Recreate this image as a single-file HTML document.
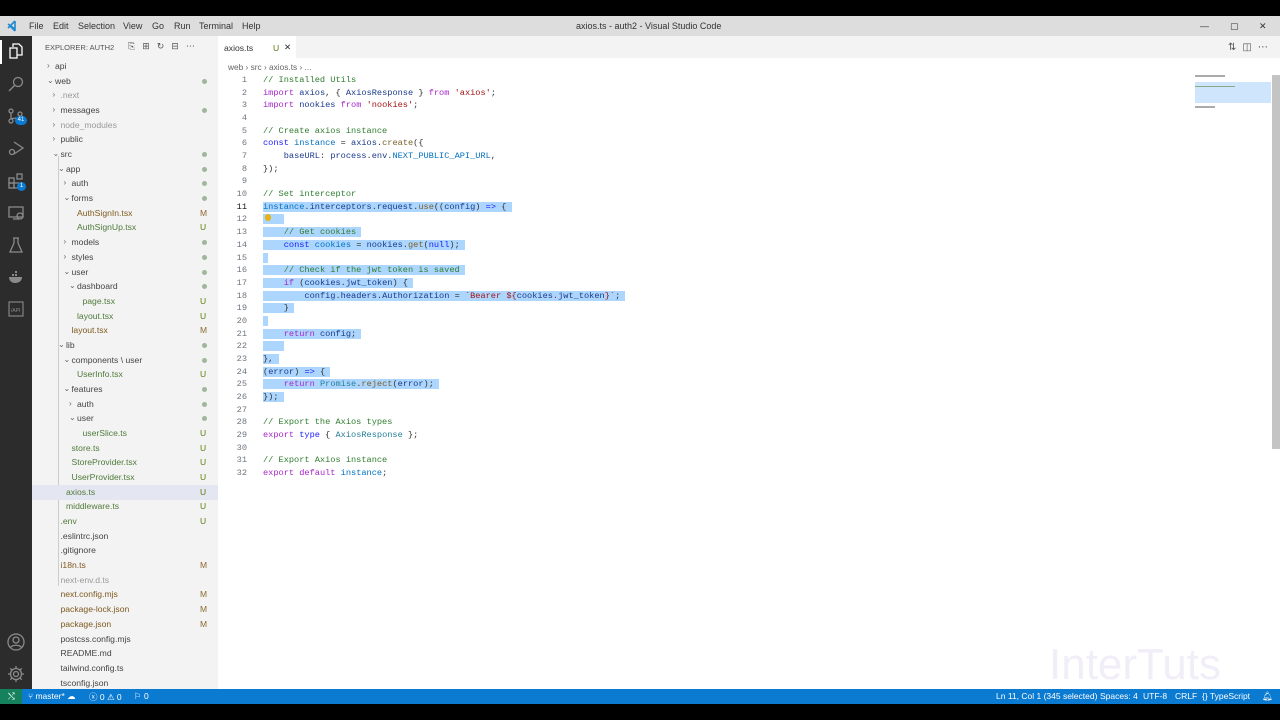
<!DOCTYPE html>
<html><head><meta charset="utf-8"><style>
*{margin:0;padding:0;box-sizing:border-box}
body{width:1280px;height:720px;background:#000;position:relative;overflow:hidden;font-family:"Liberation Sans","DejaVu Sans",sans-serif}
.abs{position:absolute}
#title{left:0;top:16px;width:1280px;height:20px;background:#dddddd;font-size:9px;color:#333}
#title span{position:absolute;top:5px}
#act{left:0;top:36px;width:32px;height:653px;background:#2c2c2c}
#side{left:32px;top:36px;width:186px;height:653px;background:#f3f3f3;font-size:8.6px;color:#444}
.row{position:absolute;left:0;width:186px;height:14.68px;line-height:14.68px;white-space:nowrap}
.row .b{position:absolute;left:168px;font-size:8.5px}
.row .d{position:absolute;left:170px;top:5px;width:5px;height:5px;border-radius:50%;background:#9fb79a}
.chev{position:absolute;font-size:8px;color:#666}
#tabs{left:218px;top:36px;width:1062px;height:22px;background:#f3f3f3}
#ed{left:218px;top:58px;width:1062px;height:631px;background:#fff}
.ln{position:absolute;left:0;width:29px;text-align:right;font:8.65px "Liberation Mono",monospace;color:#6e7681}
.cl{position:absolute;left:45px;font:8.65px/12.68px "Liberation Mono",monospace;color:#333;white-space:pre}
.s{background:#add6ff}
.c{color:#2f7d2f}.k{color:#1a1aff}.p{color:#a626c9}.st{color:#a31515}.v{color:#1a3a8a}.f{color:#795e26}.t{color:#267f99}.n{color:#0070c1}
#status{left:0;top:689px;width:1280px;height:15px;background:#0b7ad1;color:#fff;font-size:8.5px}
#status span{position:absolute;top:2px}
</style></head><body>
<div id="title" class="abs">
<svg class="abs" style="left:6px;top:4px" width="12" height="12" viewBox="0 0 12 12"><path d="M9 1L4 6l5 5M9 1v10M2 4l7 5M2 8l2-2" stroke="#1f8ad2" stroke-width="1.6" fill="none"/></svg>
<span style="left:29px">File</span><span style="left:53px">Edit</span><span style="left:78px">Selection</span><span style="left:123px">View</span><span style="left:152px">Go</span><span style="left:174px">Run</span><span style="left:199px">Terminal</span><span style="left:242px">Help</span>
<span style="left:576px">axios.ts - auth2 - Visual Studio Code</span>
<span style="left:1200px">—</span><span style="left:1230px">▢</span><span style="left:1259px">✕</span>
</div>
<div id="act" class="abs">
<div class="abs" style="left:0;top:4px;width:2px;height:24px;background:#fff"></div>
<svg class="abs" style="left:8px;top:7px" width="16" height="16" viewBox="0 0 16 16" fill="none" stroke="#fff" stroke-width="1.3"><path d="M5 4V1h6l3 3v8H9"/><rect x="2" y="5" width="7" height="10"/></svg>
<svg class="abs" style="left:8px;top:40px" width="16" height="16" viewBox="0 0 16 16" fill="none" stroke="#8a8a8a" stroke-width="1.3"><circle cx="10" cy="6" r="4.5"/><path d="M7 9l-6 6"/></svg>
<svg class="abs" style="left:8px;top:72px" width="16" height="16" viewBox="0 0 16 16" fill="none" stroke="#8a8a8a" stroke-width="1.3"><circle cx="3" cy="3" r="2"/><circle cx="3" cy="13" r="2"/><circle cx="12" cy="6" r="2"/><path d="M3 5v6M12 8c0 3-9 2-9 3"/></svg>
<div class="abs" style="left:15px;top:80px;width:12px;height:9px;border-radius:5px;background:#0b7ad1;color:#fff;font-size:6px;text-align:center;line-height:9px">41</div>
<svg class="abs" style="left:8px;top:104px" width="16" height="16" viewBox="0 0 16 16" fill="none" stroke="#8a8a8a" stroke-width="1.3"><path d="M6 2l9 6-9 6"/><circle cx="4" cy="12" r="2.5"/></svg>
<svg class="abs" style="left:8px;top:137px" width="16" height="16" viewBox="0 0 16 16" fill="none" stroke="#8a8a8a" stroke-width="1.3"><rect x="1" y="5" width="5" height="5"/><rect x="1" y="10" width="5" height="5"/><rect x="6" y="10" width="5" height="5"/><rect x="9" y="1" width="5" height="5"/></svg>
<div class="abs" style="left:17px;top:146px;width:9px;height:9px;border-radius:5px;background:#0b7ad1;color:#fff;font-size:6px;text-align:center;line-height:9px">1</div>
<svg class="abs" style="left:8px;top:169px" width="16" height="16" viewBox="0 0 16 16" fill="none" stroke="#8a8a8a" stroke-width="1.3"><rect x="1" y="2" width="14" height="10"/><path d="M5 14h6"/><circle cx="12" cy="11" r="3"/></svg>
<svg class="abs" style="left:8px;top:201px" width="16" height="16" viewBox="0 0 16 16" fill="none" stroke="#8a8a8a" stroke-width="1.3"><path d="M5 1h6M6 1v5L2 15h12L10 6V1"/></svg>
<svg class="abs" style="left:8px;top:233px" width="16" height="16" viewBox="0 0 16 16"><path d="M1 8h13c0 4-3 6-7 6S1 11 1 8z" fill="#8a8a8a"/><rect x="4" y="5" width="2" height="2" fill="#8a8a8a"/><rect x="7" y="5" width="2" height="2" fill="#8a8a8a"/><rect x="7" y="2" width="2" height="2" fill="#8a8a8a"/></svg>
<svg class="abs" style="left:8px;top:265px" width="16" height="16" viewBox="0 0 16 16" fill="none" stroke="#8a8a8a" stroke-width="1.1"><rect x="1" y="1" width="14" height="14"/><text x="3" y="11" font-size="5" fill="#8a8a8a" stroke="none" font-family="Liberation Sans">/API</text></svg>
<svg class="abs" style="left:7px;top:597px" width="18" height="18" viewBox="0 0 18 18" fill="none" stroke="#8a8a8a" stroke-width="1.3"><circle cx="9" cy="9" r="8"/><circle cx="9" cy="7" r="3"/><path d="M3.5 14.5c2-3 9-3 11 0"/></svg>
<svg class="abs" style="left:7px;top:629px" width="18" height="18" viewBox="0 0 18 18" fill="none" stroke="#8a8a8a" stroke-width="1.3"><circle cx="9" cy="9" r="2.5"/><path d="M9 1v3M9 14v3M1 9h3M14 9h3M3.3 3.3l2.1 2.1M12.6 12.6l2.1 2.1M3.3 14.7l2.1-2.1M12.6 5.4l2.1-2.1"/><circle cx="9" cy="9" r="5.5"/></svg>
</div>
<div id="side" class="abs">
<div class="abs" style="left:13px;top:7px;font-size:7.5px;color:#555">EXPLORER: AUTH2</div>
<div class="abs" style="left:96px;top:5px;font-size:9px;color:#555;letter-spacing:7px">⎘⊞↻⊟⋯</div>
<div class="abs" style="left:26px;top:120px;width:1px;height:430px;background:#ccc"></div>
<div class="abs" style="left:0;top:449px;width:186px;height:14.68px;background:#e4e6f1"></div>
<div id="tree"></div>
</div>
<div id="tabs" class="abs">
<div class="abs" style="left:0;top:0;width:78px;height:22px;background:#fff;font-size:8.6px;color:#333"><span class="abs" style="left:6px;top:7px">axios.ts</span><span class="abs" style="left:55px;top:7px;color:#587c0c">U</span><span class="abs" style="left:66px;top:6px">✕</span></div>
<div class="abs" style="left:1010px;top:6px;font-size:10px;color:#555;letter-spacing:6px">⇅◫⋯</div>
</div>
<div id="ed" class="abs">
<div class="abs" style="left:10px;top:4px;font-size:8.3px;color:#666">web › src › axios.ts › ...</div>
<div class="abs" style="left:977px;top:17px;width:75px;height:42px;font:2px monospace;color:#999"></div>
<div class="abs" style="left:977px;top:24px;width:76px;height:21px;background:#cfe5fb"></div>
<div class="abs" style="left:977px;top:17px;width:30px;height:2px;background:#aaa"></div>
<div class="abs" style="left:977px;top:28px;width:40px;height:1px;background:#8a8"></div>
<div class="abs" style="left:977px;top:48px;width:20px;height:2px;background:#aaa"></div>
<div class="abs" style="left:1054px;top:17px;width:8px;height:374px;background:#c4c4c4"></div>
<div class="abs" style="left:831px;top:582px;font-size:44px;color:#f1eef8">InterTuts</div>
<div id="code"></div>
</div>
<div id="status" class="abs">
<div class="abs" style="left:0;top:0;width:22px;height:15px;background:#16825d"></div>
<span style="left:8px">⤭</span><span style="left:28px">⑂ master* ☁</span><span style="left:89px">ⓧ 0 ⚠ 0</span><span style="left:134px">⚐ 0</span>
<span style="left:996px">Ln 11, Col 1 (345 selected)</span><span style="left:1100px">Spaces: 4</span><span style="left:1143px">UTF-8</span><span style="left:1175px">CRLF</span><span style="left:1202px">{} TypeScript</span><span style="left:1262px">🔔︎</span>
</div>
<script>
var rows=[["api",0,"c"],["web",0,"o","d"],[".next",1,"c","","#999"],["messages",1,"c","d"],["node_modules",1,"c","","#999"],["public",1,"c"],["src",1,"o","d"],["app",2,"o","d"],["auth",3,"c","d"],["forms",3,"o","d"],["AuthSignIn.tsx",4,"","M"],["AuthSignUp.tsx",4,"","U"],["models",3,"c","d"],["styles",3,"c","d"],["user",3,"o","d"],["dashboard",4,"o","d"],["page.tsx",5,"","U"],["layout.tsx",4,"","U"],["layout.tsx",3,"","M"],["lib",2,"o","d"],["components \\ user",3,"o","d"],["UserInfo.tsx",4,"","U"],["features",3,"o","d"],["auth",4,"c","d"],["user",4,"o","d"],["userSlice.ts",5,"","U"],["store.ts",3,"","U"],["StoreProvider.tsx",3,"","U"],["UserProvider.tsx",3,"","U"],["axios.ts",2,"","U"],["middleware.ts",2,"","U"],[".env",1,"","U"],[".eslintrc.json",1],[".gitignore",1],["i18n.ts",1,"","M"],["next-env.d.ts",1,"","","#999"],["next.config.mjs",1,"","M"],["package-lock.json",1,"","M"],["package.json",1,"","M"],["postcss.config.mjs",1],["README.md",1],["tailwind.config.ts",1],["tsconfig.json",1]];
var h="";rows.forEach(function(r,i){var x=23+5.5*r[1],top=23+i*14.68;var col=r[4]||(r[3]=="U"?"#4f7a3a":r[3]=="M"?"#7e5a1e":"#444");
h+='<div class="row" style="top:'+top+'px">';
if(r[2])h+='<span class="chev" style="left:'+(x-8)+'px">'+(r[2]=="o"?"⌄":"›")+'</span>';
h+='<span class="abs" style="left:'+x+'px;color:'+col+'">'+r[0]+'</span>';
if(r[3]=="d")h+='<span class="d"></span>';else if(r[3])h+='<span class="b" style="color:'+(r[3]=="U"?"#587c0c":"#8a6a2a")+'">'+r[3]+'</span>';
h+='</div>';});document.getElementById("tree").innerHTML=h;
var L=[
'<span class="c">// Installed Utils</span>',
'<span class="p">import</span> <span class="v">axios</span>, { <span class="v">AxiosResponse</span> } <span class="p">from</span> <span class="st">\'axios\'</span>;',
'<span class="p">import</span> <span class="v">nookies</span> <span class="p">from</span> <span class="st">\'nookies\'</span>;',
'',
'<span class="c">// Create axios instance</span>',
'<span class="k">const</span> <span class="n">instance</span> = <span class="v">axios</span>.<span class="f">create</span>({',
'    <span class="v">baseURL</span>: <span class="v">process</span>.<span class="v">env</span>.<span class="n">NEXT_PUBLIC_API_URL</span>,',
'});',
'',
'<span class="c">// Set interceptor</span>',
'<span class="s"><span class="n">instance</span>.<span class="v">interceptors</span>.<span class="v">request</span>.<span class="f">use</span>((<span class="v">config</span>) <span class="k">=&gt;</span> { </span>',
'<span class="s">    </span>',
'<span class="s">    <span class="c">// Get cookies</span> </span>',
'<span class="s">    <span class="k">const</span> <span class="n">cookies</span> = <span class="v">nookies</span>.<span class="f">get</span>(<span class="k">null</span>); </span>',
'<span class="s"> </span>',
'<span class="s">    <span class="c">// Check if the jwt token is saved</span> </span>',
'<span class="s">    <span class="p">if</span> (<span class="v">cookies</span>.<span class="v">jwt_token</span>) { </span>',
'<span class="s">        <span class="v">config</span>.<span class="v">headers</span>.<span class="v">Authorization</span> = <span class="st">`Bearer ${<span class="v">cookies</span>.<span class="v">jwt_token</span>}`</span>; </span>',
'<span class="s">    } </span>',
'<span class="s"> </span>',
'<span class="s">    <span class="p">return</span> <span class="v">config</span>; </span>',
'<span class="s">    </span>',
'<span class="s">}, </span>',
'<span class="s">(<span class="v">error</span>) <span class="k">=&gt;</span> { </span>',
'<span class="s">    <span class="p">return</span> <span class="t">Promise</span>.<span class="f">reject</span>(<span class="v">error</span>); </span>',
'<span class="s">}); </span>',
'',
'<span class="c">// Export the Axios types</span>',
'<span class="p">export</span> <span class="k">type</span> { <span class="t">AxiosResponse</span> };',
'',
'<span class="c">// Export Axios instance</span>',
'<span class="p">export</span> <span class="p">default</span> <span class="n">instance</span>;'];
var c="";L.forEach(function(s,i){var t=16+i*12.68;c+='<div class="ln" style="top:'+(t+1)+'px;'+(i==10?'color:#111':'')+'">'+(i+1)+'</div><div class="cl" style="top:'+t+'px">'+s+'</div>';});
c+='<div class="abs" style="left:47px;top:156px;width:6px;height:7px;border-radius:3px;background:#e5b21a"></div>';
document.getElementById("code").innerHTML=c;
</script>
</body></html>
